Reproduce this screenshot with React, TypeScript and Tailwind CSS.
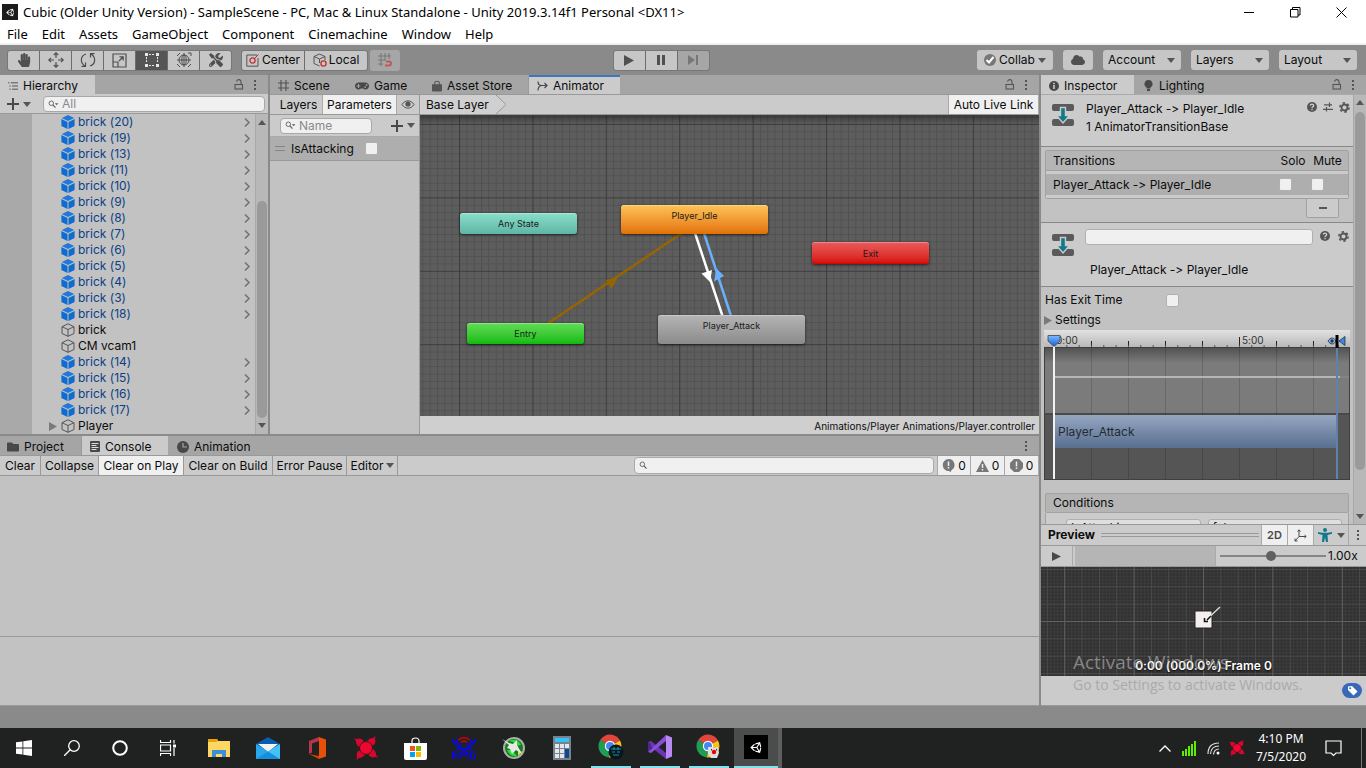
import React, { useState } from 'react';
import clsx from 'clsx';
import { FaCloud, FaFolder, FaGamepad, FaHandPaper, FaTools, FaUnity } from 'react-icons/fa';

type IconProps = { className?: string };

const BRICKS_TOP = [20, 19, 13, 11, 10, 9, 8, 7, 6, 5, 4, 3, 18];
const BRICKS_BOTTOM = [14, 15, 16, 17];

interface HierarchyItem {
  name: string;
  prefab: boolean;
  expandable?: boolean;
}

const hierarchyItems: HierarchyItem[] = [
  ...BRICKS_TOP.map(n => ({ name: `brick (${n})`, prefab: true })),
  { name: 'brick', prefab: false },
  { name: 'CM vcam1', prefab: false },
  ...BRICKS_BOTTOM.map(n => ({ name: `brick (${n})`, prefab: true })),
  { name: 'Player', prefab: false, expandable: true },
];

const menuItems = ['File', 'Edit', 'Assets', 'GameObject', 'Component', 'Cinemachine', 'Window', 'Help'];

/* ---------- small icons ---------- */

const Caret: React.FC<IconProps> = ({ className = 'text-[#555]' }) => (
  <svg width="8" height="5" viewBox="0 0 8 5" className={clsx('shrink-0', className)}><path d="M0 0h8L4 5z" fill="currentColor" /></svg>
);

const CaretUp: React.FC<IconProps> = ({ className = 'text-[#555]' }) => (
  <svg width="8" height="5" viewBox="0 0 8 5" className={clsx('shrink-0', className)}><path d="M0 5h8L4 0z" fill="currentColor" /></svg>
);

const Foldout: React.FC<IconProps> = ({ className }) => (
  <svg width="8" height="9" viewBox="0 0 8 9" className={clsx('shrink-0 text-[#7a7a7a]', className)}><path d="M0 0l8 4.5L0 9z" fill="currentColor" /></svg>
);

const PlusIcon: React.FC = () => (
  <svg width="12" height="12" viewBox="0 0 12 12"><path d="M6 0v12M0 6h12" stroke="#484848" strokeWidth="2" /></svg>
);

const Kebab: React.FC = () => (
  <svg width="4" height="12" viewBox="0 0 4 12" fill="#555"><rect x="1" y="1" width="2" height="2" /><rect x="1" y="5" width="2" height="2" /><rect x="1" y="9" width="2" height="2" /></svg>
);

const LockIcon: React.FC = () => (
  <svg width="10" height="11" viewBox="0 0 10 11" fill="none" stroke="#555" strokeWidth="1.1"><rect x="1" y="5.5" width="7.5" height="4.5" /><path d="M7 5.5V3a2.2 2.2 0 0 0-4.4-.4" /></svg>
);

const SearchIcon: React.FC<{ dropdown?: boolean }> = ({ dropdown }) => (
  <svg width="11" height="9" viewBox="0 0 12 10" fill="none" stroke="#5f5f5f" strokeWidth="1"><circle cx="3.6" cy="3.6" r="2.5" /><path d="M5.4 5.4L8.2 8.4" strokeWidth="1.3" />{dropdown && <path d="M7.500 3.6h4l-2 2.200z" fill="#5f5f5f" stroke="none" />}</svg>
);

const CubeIcon: React.FC<{ solid: boolean }> = ({ solid }) => (
  <svg width="14" height="14" viewBox="0 0 14 14" className="shrink-0">
    {solid ? (
      <>
        <path d="M7 0l6.2 3L7 6 .8 3z" fill="#2277da" />
        <path d="M.4 4.1l6.1 2.8V14L.4 11z" fill="#0f6dd2" />
        <path d="M13.6 4.1L7.5 6.9V14l6.1-3z" fill="#0f6dd2" />
      </>
    ) : (
      <path d="M7 .8l6 2.9v6.8l-6 2.8-6-2.8V3.7zM1 3.7l6 2.8 6-2.8M7 6.5v6.8" fill="none" stroke="#555" strokeWidth="1" strokeLinejoin="round" />
    )}
  </svg>
);

const HierarchyIcon: React.FC = () => (
  <svg width="10" height="10" viewBox="0 0 11 10" fill="none" stroke="#484848"><path d="M0 1.5h1.500M3 1.500h8M1.500 5h1.500M4.500 5h6.500M1.500 8.500h1.500M4.500 8.500h6.500" /></svg>
);

const GridIcon: React.FC = () => (
  <svg width="11" height="11" viewBox="0 0 11 11" stroke="#555" strokeWidth="1.200"><path d="M3 0v11M8 0v11M0 3h11M0 8h11" /></svg>
);

const BagIcon: React.FC = () => (
  <svg width="10" height="12" viewBox="0 0 11 12"><path d="M0 4h11v7q0 1-1 1H1q-1 0-1-1z" fill="#555" /><path d="M3 5.500V2.500Q3 .8 5.500.8T8 2.500v3" fill="none" stroke="#555" strokeWidth="1.200" /></svg>
);

const AnimatorIcon: React.FC = () => (
  <svg width="11" height="10" viewBox="0 0 11 10" fill="none" stroke="#484848" strokeWidth="1.200"><path d="M1 .5c0 3 1.500 4 4 4h4.500M1 9.500c0-3 1-4.500 3.500-5M7.500 2l2.500 2.500L7.500 7" /></svg>
);

const EyeIcon: React.FC = () => (
  <svg width="14" height="9" viewBox="0 0 14 9"><path d="M1 4.500C4-.4 10-.4 13 4.500 10 9.400 4 9.400 1 4.500z" fill="none" stroke="#555" /><circle cx="7" cy="4" r="2.600" fill="#555" /></svg>
);

const ConsoleIcon: React.FC = () => (
  <svg width="10" height="11" viewBox="0 0 10 11"><rect width="10" height="11" rx="1" fill="#484848" /><path d="M1.500 2.500h7M1.500 4.500h5M1.500 6.500h7M1.500 8.500h5" stroke="#ddd" /></svg>
);

const ClockIcon: React.FC = () => (
  <svg width="12" height="12" viewBox="0 0 12 12"><circle cx="6" cy="6" r="6" fill="#484848" /><path d="M6 2v4h4" fill="none" stroke="#a5a5a5" strokeWidth="1.200" /></svg>
);

const InfoIcon: React.FC = () => (
  <svg width="10" height="10" viewBox="0 0 10 10"><circle cx="5" cy="5" r="5" fill="#484848" /><path d="M5 4v4M5 1.800v1.400" stroke="#ccc" strokeWidth="1.600" /></svg>
);

const BulbIcon: React.FC = () => (
  <svg width="9" height="11" viewBox="0 0 9 11" fill="#484848"><path d="M4.500 0a4 4 0 0 1 2 7.500V8.500h-4V7.500a4 4 0 0 1 2-7.500zM3 9h3v2H3z" /></svg>
);

const HelpIcon: React.FC = () => (
  <svg width="10" height="10" viewBox="0 0 10 10"><circle cx="5" cy="5" r="5" fill="#555" /><path d="M3.300 3.700Q3.500 2.200 5 2.200t1.700 1.400C6.700 4.900 5 4.800 5 6.200M5 7v1.300" fill="none" stroke="#d5d5d5" strokeWidth="1.200" /></svg>
);

const PresetIcon: React.FC = () => (
  <svg width="10" height="10" viewBox="0 0 10 10" stroke="#555" strokeWidth="1.200"><path d="M1 2.800h8M6.500.6v4.400M0 7.300h10M3.500 5v4.600" /></svg>
);

const GearIcon: React.FC = () => (
  <svg width="11" height="11" viewBox="0 0 11 11" fill="none" stroke="#555"><circle cx="5.500" cy="5.500" r="3" strokeWidth="1.800" /><circle cx="5.500" cy="5.500" r="4.600" strokeWidth="1.600" strokeDasharray="2.300 2.500" /></svg>
);

const TransitionIcon: React.FC = () => (
  <svg width="22" height="22" viewBox="0 0 22 22" className="shrink-0">
    <path d="M2 0h18q2 0 2 2v3q0 2-2 2H2Q0 7 0 5V2Q0 0 2 0zM2 15h18q2 0 2 2v3q0 2-2 2H2q-2 0-2-2v-3q0-2 2-2z" fill="#5a5a5a" />
    <path d="M8.500 3.500h5v8H17.500l-6.500 7.500-6.500-7.500h4z" fill="#14788c" stroke="#cbcbcb" strokeWidth="1.400" />
  </svg>
);

/* ---------- shared controls ---------- */

const IconButton: React.FC<{ label: string; className?: string; children: React.ReactNode }> = ({ label, className, children }) => (
  <button aria-label={label} className={clsx('flex items-center justify-center shrink-0', className)}>{children}</button>
);

const Dropdown: React.FC<{ label: string; className?: string; selectClass: string }> = ({ label, className, selectClass }) => (
  <div className={clsx('relative flex items-center', className)}>
    <select aria-label={label} className={clsx('w-full appearance-none outline-none', selectClass)}>
      <option>{label}</option>
    </select>
    <Caret className="absolute right-1.5 pointer-events-none text-[#555]" />
  </div>
);

const checkboxClass = 'appearance-none w-[13px] h-[13px] rounded-[2px] bg-[#f0f0f0] border border-[#b0b0b0] checked:bg-[#3a72b0]';

const Tab: React.FC<{ icon: React.ReactNode; label: string; active?: boolean; focused?: boolean; className?: string }> = ({ icon, label, active, focused, className }) => (
  <button
    className={clsx(
      'flex items-center gap-[5px] h-[19px] px-2 whitespace-nowrap border-t-2',
      active ? 'bg-[#cbcbcb]' : 'border-r border-r-[#9a9a9a]',
      focused ? 'border-t-[#3a79bb]' : 'border-t-transparent',
      className,
    )}
  >
    {icon}
    <span>{label}</span>
  </button>
);

const TabActions: React.FC<{ lock?: boolean }> = ({ lock = true }) => (
  <div className="ml-auto flex items-center gap-[9px] pr-[11px]">
    {lock && <IconButton label="Lock"><LockIcon /></IconButton>}
    <IconButton label="Panel menu"><Kebab /></IconButton>
  </div>
);

const tabBarClass = 'flex h-[19px] shrink-0 bg-[#a5a5a5]';
const toolbarClass = 'flex h-[21px] shrink-0 bg-[#cbcbcb] border-y border-[#999]';

/* ---------- window chrome ---------- */

const TitleBar: React.FC = () => (
  <header className="bg-white text-black font-['Noto_Sans',sans-serif] text-[13px] border-b-2 border-[#f0f0f0]">
    <div className="flex items-center h-6 pl-[2px] pr-[2px]">
      <div className="w-4 h-4 bg-[#1c1c1c] flex items-center justify-center"><FaUnity size={9} className="text-white" /></div>
      <h1 className="ml-[5px] whitespace-nowrap">Cubic (Older Unity Version) - SampleScene - PC, Mac &amp; Linux Standalone - Unity 2019.3.14f1 Personal &lt;DX11&gt;</h1>
      <div className="ml-auto flex">
        <IconButton label="Minimize" className="w-[46px] h-5"><svg width="11" height="11"><path d="M0 5.500h10" stroke="#000" /></svg></IconButton>
        <IconButton label="Restore" className="w-[46px] h-5"><svg width="11" height="11" fill="none" stroke="#000"><path d="M.5 2.500h7.500v7.500H.5zM2.500 2.500V.5H10v7.500H8" /></svg></IconButton>
        <IconButton label="Close" className="w-[46px] h-5"><svg width="11" height="11" stroke="#000"><path d="M.5.5l10 10M10.500.5l-10 10" /></svg></IconButton>
      </div>
    </div>
    <nav className="flex h-[19px] pl-[7px] gap-[14px] items-center">
      {menuItems.map(item => <button key={item} className="whitespace-nowrap">{item}</button>)}
    </nav>
  </header>
);

const ToolGroup: React.FC<{ className?: string; children: React.ReactNode }> = ({ className, children }) => (
  <div className={clsx('flex h-[21px] rounded-[3px] overflow-hidden bg-[#6c6c6c] gap-px border border-[#777]', className)}>{children}</div>
);

const toolButton = 'w-[31px] bg-[#c6c6c6] text-[#4f4f4f]';

const MainToolbar: React.FC = () => (
  <div className="flex items-center h-[30px] shrink-0 bg-[#8a8a8a] pl-[7px] pr-[9px]">
    <div className="flex flex-1">
      <ToolGroup>
        <IconButton label="Hand" className={toolButton}><FaHandPaper size={14} /></IconButton>
        <IconButton label="Move" className={toolButton}>
          <svg width="16" height="16" viewBox="0 0 16 16" fill="none" stroke="currentColor" strokeWidth="1.200"><path d="M8 1v5M8 10v5M1 8h5M10 8h5M5.800 3L8 .8 10.200 3M5.800 13L8 15.200 10.200 13M3 5.800L.8 8 3 10.200M13 5.800L15.200 8 13 10.200" /></svg>
        </IconButton>
        <IconButton label="Rotate" className={toolButton}>
          <svg width="16" height="16" viewBox="0 0 16 16" fill="none" stroke="currentColor" strokeWidth="1.200"><path d="M6 2C0 4 0 11 5 14M1.500 14.300H5.500V10.500M10 14c6-2 6-9 1-12M14.500 1.700H10.500V5.500" /></svg>
        </IconButton>
        <IconButton label="Scale" className={toolButton}>
          <svg width="15" height="15" viewBox="0 0 15 15" fill="none" stroke="currentColor" strokeWidth="1.200"><path d="M1 1h13v13H1zM1 9h5v5M7 8l4-4M7.500 3.800h3.700v3.700" /></svg>
        </IconButton>
        <IconButton label="Rect" className="w-[31px] bg-[#555] text-[#e8e8e8]">
          <svg width="14" height="14" viewBox="0 0 14 14" fill="currentColor"><path d="M0 0h3v3H0zM11 0h3v3h-3zM0 11h3v3H0zM11 11h3v3h-3z" /><path d="M4 1.500h6M4 12.500h6M1.500 4v6M12.500 4v6" stroke="currentColor" strokeDasharray="2 1" /></svg>
        </IconButton>
        <IconButton label="Transform" className={toolButton}>
          <svg width="16" height="16" viewBox="0 0 16 16" fill="none" stroke="currentColor"><circle cx="8" cy="8" r="5" /><ellipse cx="8" cy="8" rx="2.200" ry="5" /><path d="M1 8h14M8 1v14M1 4L4 1M12 1h3v3M1 12l3 3M15 12l-3 3" /></svg>
        </IconButton>
        <IconButton label="Custom tools" className={toolButton}><FaTools size={14} /></IconButton>
      </ToolGroup>
      <ToolGroup className="ml-[9px]">
        <button className="w-[62px] bg-[#c6c6c6] flex items-center justify-center gap-[3px]">
          <svg width="13" height="13" viewBox="0 0 13 13" fill="none"><path d="M11 1H.8v11.200H12V4" stroke="#555" /><circle cx="6.500" cy="6.500" r="2.600" stroke="#c03030" strokeWidth="1.300" /><path d="M8.500 4.500L12.500.5" stroke="#c03030" /></svg>
          Center
        </button>
        <button className="w-[62px] bg-[#c6c6c6] flex items-center justify-center gap-[2px]">
          <svg width="14" height="14" viewBox="0 0 14 14" fill="none"><path d="M6.500 13L1 10.500V3.500L6.500 1 12 3.500V7M1 3.500L6.500 6 12 3.500M6.500 6v4" stroke="#555" /><circle cx="10.500" cy="10.500" r="2.600" stroke="#c03030" strokeWidth="1.300" /></svg>
          Local
        </button>
      </ToolGroup>
      <button aria-label="Grid snapping" className="ml-[2px] w-[30px] h-[21px] rounded-[3px] bg-[#a6a6a6] flex items-center justify-center">
        <svg width="14" height="14" viewBox="0 0 14 14" fill="none"><path d="M3 0v13M7 0v8M11 0v6M0 3h13M0 7h7M0 11h5" stroke="#777" /><path d="M8 8.500h3a2 2 0 0 1 0 4H7" stroke="#c05a5a" strokeWidth="2" /></svg>
      </button>
    </div>
    <ToolGroup className="mr-[42px]">
      <IconButton label="Play" className={toolButton}><svg width="10" height="11"><path d="M0 0l10 5.500L0 11z" fill="#505050" /></svg></IconButton>
      <IconButton label="Pause" className={toolButton}><svg width="8" height="10"><path d="M0 0h3v10H0zM5 0h3v10H5z" fill="#505050" /></svg></IconButton>
      <IconButton label="Step" className="w-[31px] bg-[#a6a6a6]"><svg width="10" height="10"><path d="M0 0l7 5-7 5zM8 0h2v10H8z" fill="#777" /></svg></IconButton>
    </ToolGroup>
    <div className="flex flex-1 justify-end gap-[10px]">
      <button className="flex items-center justify-center w-[76px] h-5 rounded-[3px] bg-[#c6c6c6] gap-[3px]">
        <svg width="12" height="12" viewBox="0 0 12 12"><circle cx="6" cy="6" r="6" fill="#777" /><path d="M2.500 6l2.500 2.500L9.500 3" fill="none" stroke="#fff" strokeWidth="2" /></svg>
        Collab <Caret />
      </button>
      <IconButton label="Cloud services" className="w-[30px] h-5 rounded-[3px] bg-[#c6c6c6] text-[#505050]"><FaCloud size={14} /></IconButton>
      {['Account', 'Layers', 'Layout'].map(label => (
        <Dropdown key={label} label={label} className="w-[78px]" selectClass="h-5 pl-[5px] rounded-[3px] bg-[#c6c6c6]" />
      ))}
    </div>
  </div>
);

/* ---------- hierarchy ---------- */

const HierarchyRow: React.FC<{ item: HierarchyItem }> = ({ item }) => (
  <li className={clsx('flex items-center h-4 pl-[17px] pr-1', item.prefab && 'text-[#0a3f87]')}>
    <span className="w-[12px] flex justify-start">{item.expandable && <Foldout />}</span>
    <CubeIcon solid={item.prefab} />
    <span className="ml-[3px] flex-1 whitespace-nowrap">{item.name}</span>
    {item.prefab && <svg width="7" height="9" viewBox="0 0 7 9" fill="none" stroke="#707070" strokeWidth="1.500"><path d="M1 .5l4 4-4 4" /></svg>}
  </li>
);

const HierarchyPanel: React.FC = () => (
  <section className="w-[268px] shrink-0 flex flex-col">
    <div className={tabBarClass}>
      <Tab icon={<HierarchyIcon />} label="Hierarchy" active className="w-[95px]" />
      <TabActions />
    </div>
    <div className="flex items-center h-5 pt-px bg-[#cbcbcb] border-b border-[#999] pl-[7px] pr-[3px]">
      <IconButton label="Create" className="gap-[4px] w-9 justify-start"><PlusIcon /><Caret /></IconButton>
      <label className="flex flex-1 min-w-0 items-center h-4 rounded-[4px] bg-[#f0f0f0] border border-[#a8a8a8] pl-1 gap-[3px]">
        <SearchIcon dropdown />
        <input aria-label="Search hierarchy" placeholder="All" className="min-w-0 flex-1 outline-none placeholder:text-[#8a8a8a]" />
      </label>
    </div>
    <div className="flex flex-1">
      <div className="w-8 bg-[#a9a9a9]" />
      <ul className="flex-1">
        {hierarchyItems.map(item => <HierarchyRow key={item.name} item={item} />)}
      </ul>
      <div className="w-[13px] flex flex-col items-center justify-between bg-[#b8b8b8] border-l border-[#a8a8a8] py-[6px]">
        <CaretUp />
        <div className="w-[10px] flex-1 flex flex-col justify-end pb-[5px]"><div className="h-[74%] rounded-full bg-[#9a9a9a]" /></div>
        <Caret />
      </div>
    </div>
  </section>
);

/* ---------- animator ---------- */

interface StateNode {
  name: string;
  tone: string;
  place: string;
}

const stateNodes: StateNode[] = [
  { name: 'Any State', tone: 'from-[#8adfca] to-[#5fb5a5]', place: 'left-[40px] top-[98px] w-[117px] h-[21px] items-center' },
  { name: 'Player_Idle', tone: 'from-[#fdc455] to-[#e27100]', place: 'left-[201px] top-[90px] w-[147px] h-[29px] pt-[5px] items-start' },
  { name: 'Exit', tone: 'from-[#e95a5a] to-[#d50000]', place: 'left-[392px] top-[127px] w-[117px] h-[22px] items-center' },
  { name: 'Entry', tone: 'from-[#5fdc55] to-[#08bb08]', place: 'left-[47px] top-[208px] w-[117px] h-[21px] items-center' },
  { name: 'Player_Attack', tone: 'from-[#b5b5b5] to-[#8b8b8b]', place: 'left-[238px] top-[200px] w-[147px] h-[29px] pt-[5px] items-start' },
];

const AnimatorGraph: React.FC = () => (
  <div className="relative flex-1 overflow-hidden bg-[#5d5d5d]">
    <svg width="100%" height="100%" className="absolute inset-0">
      <defs>
        <pattern id="graph-minor" x="39" y="9" width="7.340" height="7.340" patternUnits="userSpaceOnUse">
          <path d="M.5 0v7.340M0 .5h7.340" stroke="#000" strokeOpacity=".13" />
        </pattern>
        <pattern id="graph-major" x="39" y="9" width="73.400" height="73.400" patternUnits="userSpaceOnUse">
          <path d="M.5 0v73.400M0 .5h73.400" stroke="#000" strokeOpacity=".24" strokeWidth="1.200" />
        </pattern>
        <linearGradient id="graph-shade" x1="0" y1="0" x2="0" y2="1"><stop offset="0" stopOpacity=".35" /><stop offset="1" stopOpacity="0" /></linearGradient>
      </defs>
      <rect width="100%" height="100%" fill="url(#graph-minor)" />
      <rect width="100%" height="100%" fill="url(#graph-major)" />
      <rect width="100%" height="10" fill="url(#graph-shade)" />
      <path d="M127 209L262 118" stroke="#966400" strokeWidth="2.500" />
      <path d="M198 162L185.500 165 191.500 174z" fill="#966400" />
      <path d="M275 118L302.500 201" stroke="#fff" strokeWidth="2.500" />
      <path d="M281.500 158.500L292 155 290 167z" fill="#fff" />
      <path d="M284 118L311 201" stroke="#6ab0fc" strokeWidth="2.500" />
      <path d="M296.500 153.500L294 166.500 304 161z" fill="#6ab0fc" />
    </svg>
    {stateNodes.map(node => (
      <button key={node.name} className={clsx('absolute flex justify-center rounded-[3px] bg-linear-to-b text-[9px] leading-[11px] text-[#1a1a1a] shadow-[0_1px_3px_rgba(0,0,0,0.6),inset_0_1px_0_rgba(255,255,255,0.3)]', node.tone, node.place)}>
        {node.name}
      </button>
    ))}
  </div>
);

const AnimatorPanel: React.FC = () => {
  const [isAttacking, setIsAttacking] = useState(false);

  return (
    <section className="flex-1 min-w-0 flex flex-col">
      <div className={tabBarClass}>
        <Tab icon={<GridIcon />} label="Scene" className="w-[77px] border-r-0" />
        <Tab icon={<FaGamepad size={14} className="text-[#484848]" />} label="Game" className="w-[77px] border-r-0 gap-[3px]" />
        <Tab icon={<BagIcon />} label="Asset Store" className="w-[105px]" />
        <Tab icon={<AnimatorIcon />} label="Animator" active focused className="w-[91px]" />
        <TabActions />
      </div>
      <div className={toolbarClass}>
        <div className="w-[150px] shrink-0 flex pl-[5px] border-r border-[#999]">
          <button className="w-[47px]">Layers</button>
          <button className="w-[75px] bg-[#f0f0f0] border-x border-[#aaa]">Parameters</button>
          <IconButton label="Toggle visibility" className="flex-1"><EyeIcon /></IconButton>
        </div>
        <button className="pl-[6px] flex items-center whitespace-nowrap bg-[#d0d0d0]">Base Layer</button>
        <svg width="20" height="19" viewBox="0 0 20 19" className="shrink-0"><path d="M0 0h7l10 9.500L7 19H0z" fill="#d0d0d0" /><path d="M7 0l10 9.500L7 19" fill="none" stroke="#999" /></svg>
        <button className="ml-auto w-[91px] bg-[#f0f0f0] border-x border-[#aaa] whitespace-nowrap">Auto Live Link</button>
      </div>
      <div className="flex flex-1 min-h-0">
        <div className="w-[150px] shrink-0 border-r border-[#999]">
          <div className="flex items-center h-[22px] pl-[10px] pr-[4px] bg-[#cbcbcb] border-b border-[#aaa]">
            <label className="flex items-center w-[92px] h-4 rounded-[4px] bg-[#f0f0f0] border border-[#a8a8a8] pl-1 gap-[3px]">
              <SearchIcon dropdown />
              <input aria-label="Search parameters" placeholder="Name" className="min-w-0 flex-1 outline-none placeholder:text-[#8a8a8a]" />
            </label>
            <IconButton label="Add parameter" className="ml-auto gap-[4px]"><PlusIcon /><Caret /></IconButton>
          </div>
          <label className="flex items-center h-6 pl-[5px] bg-[#aeaeae] border-b border-[#999]">
            <span className="w-[10px] h-[5px] border-y border-[#858585]" />
            <span className="ml-[6px] w-[74px]">IsAttacking</span>
            <input type="checkbox" className={checkboxClass} checked={isAttacking} onChange={e => setIsAttacking(e.target.checked)} />
          </label>
        </div>
        <div className="flex-1 min-w-0 flex flex-col">
          <AnimatorGraph />
          <div className="h-[18px] shrink-0 flex items-center justify-end pr-1 pt-[2px] bg-[#cfcfcf] text-[10px]">Animations/Player Animations/Player.controller</div>
        </div>
      </div>
    </section>
  );
};

/* ---------- console ---------- */

const ConsolePanel: React.FC = () => {
  const button = 'border-r border-[#999] whitespace-nowrap';
  return (
    <section className="flex-1 flex flex-col min-h-0">
      <div className={tabBarClass}>
        <Tab icon={<FaFolder size={12} className="text-[#484848]" />} label="Project" className="w-[82px] px-[7px] gap-[4px]" />
        <Tab icon={<ConsoleIcon />} label="Console" active className="w-[86px]" />
        <Tab icon={<ClockIcon />} label="Animation" className="border-r-0 gap-[4px] px-[9px]" />
        <TabActions lock={false} />
      </div>
      <div className={toolbarClass}>
        <button className={clsx(button, 'w-[41px]')}>Clear</button>
        <button className={clsx(button, 'w-[58px]')}>Collapse</button>
        <button className={clsx(button, 'w-[85px] bg-[#f0f0f0]')}>Clear on Play</button>
        <button className={clsx(button, 'w-[89px]')}>Clear on Build</button>
        <button className={clsx(button, 'w-[74px]')}>Error Pause</button>
        <button className={clsx(button, 'w-[51px] flex items-center justify-center gap-[2px]')}>Editor <Caret /></button>
        <label className="ml-auto my-px w-[300px] flex items-center rounded-[4px] bg-[#f0f0f0] border border-[#a8a8a8] pl-1">
          <SearchIcon />
          <input aria-label="Search console" className="flex-1 min-w-0 outline-none" />
        </label>
        <div className="ml-[3px] flex">
          <button className="w-[34px] flex items-center justify-center gap-[3px] bg-[#efefef] border-x border-[#aaa]">
            <svg width="13" height="13" viewBox="0 0 13 13"><path d="M6.500 0a6 6 0 0 1 3 11.200L8.500 13 7 12A6 6 0 1 1 6.500 0z" fill="#777" /><path d="M6.500 2.500v4.500M6.500 8v1.500" stroke="#eee" strokeWidth="1.500" /></svg>0
          </button>
          <button className="w-[34px] flex items-center justify-center gap-[3px] bg-[#efefef] border-r border-[#aaa]">
            <svg width="13" height="12" viewBox="0 0 13 12"><path d="M6.500 0L13 12H0z" fill="#777" /><path d="M6.500 4v4M6.500 9v1.500" stroke="#eee" strokeWidth="1.500" /></svg>0
          </button>
          <button className="w-[34px] flex items-center justify-center gap-[3px] bg-[#efefef] border-r border-[#aaa]">
            <svg width="13" height="13" viewBox="0 0 13 13"><path d="M4 0h5l4 4v5l-4 4H4L0 9V4z" fill="#777" /><path d="M6.500 2.500v5M6.500 8.500v1.500" stroke="#eee" strokeWidth="1.500" /></svg>0
          </button>
        </div>
      </div>
      <div className="flex-1" />
      <div className="h-[70px] border-y border-[#999]" />
    </section>
  );
};

/* ---------- inspector ---------- */

const TransitionTimeline: React.FC = () => {
  const ticks = Array.from({ length: 24 }, (_, i) => i);
  return (
    <svg viewBox="0 0 306 150" className="block mx-[3px] mt-[3px]" fontFamily="Inter, sans-serif">
      <defs>
        <linearGradient id="tl-ruler" x1="0" y1="0" x2="0" y2="1"><stop offset="0" stopColor="#e2e2e2" /><stop offset="1" stopColor="#b8b8b8" /></linearGradient>
        <linearGradient id="tl-shade" x1="0" y1="0" x2="0" y2="1"><stop offset="0" stopColor="#505050" /><stop offset="1" stopColor="#7b7b7b" /></linearGradient>
        <linearGradient id="tl-clip" x1="0" y1="0" x2="0" y2="1"><stop offset="0" stopColor="#95a6c0" /><stop offset="1" stopColor="#586f90" /></linearGradient>
        <linearGradient id="tl-head" x1="0" y1="0" x2="0" y2="1"><stop offset="0" stopColor="#7cbaff" /><stop offset="1" stopColor="#1260d8" /></linearGradient>
      </defs>
      <rect width="306" height="17" fill="url(#tl-ruler)" />
      <rect y="17" width="306" height="66" fill="#7b7b7b" />
      <rect y="17" width="306" height="16" fill="url(#tl-shade)" />
      <rect y="83" width="306" height="67" fill="#555" />
      <path d="M0 17.500h306M0 84h306M0 149.500h306M.5 17v133M305.500 17v133" stroke="#404040" />
      {ticks.slice(1, 8).map(i => (
        <path key={i} d={`M${10.500 + i * 37} ${i === 5 ? 7 : 11}V17`} stroke="#222" />
      ))}
      {ticks.map(i => (
        <path key={i} d={`M${10.500 + i * 12.330} 15V17`} stroke="#555" />
      ))}
      {ticks.slice(1, 8).map(i => (
        <path key={i} d={`M${10.500 + i * 37} 18V149`} stroke="#000" strokeOpacity=".15" />
      ))}
      <text x="12" y="14" fontSize="10" fill="#333">0:00</text>
      <text x="198" y="14" fontSize="10" fill="#333">5:00</text>
      <path d="M10 47h286" stroke="#c8c8c8" strokeWidth="1.500" />
      <path d="M296 47h9" stroke="#8c8c8c" />
      <rect x="10" y="85" width="284" height="33" fill="url(#tl-clip)" />
      <text x="14" y="106" fontSize="12" fill="#252a33">Player_Attack</text>
      <path d="M293 17V149" stroke="#6080b0" strokeWidth="2" />
      <path d="M10 12V149" stroke="#f2f2f2" strokeWidth="2" />
      <path d="M4 5.500h12V11L10 16.500 4 11z" fill="url(#tl-head)" stroke="#444" strokeWidth=".8" />
      <path d="M284 11c2.500-4 6-4 8 0-2 4-5.500 4-8 0z" fill="#8fb8e8" stroke="#345" />
      <path d="M301 6.500v9l-6-4.500z" fill="#3b87e6" stroke="#234" strokeWidth=".8" />
      <circle cx="288" cy="11" r="1.700" fill="#235" />
      <path d="M293 5v13" stroke="#000" strokeWidth="3" />
    </svg>
  );
};

const InspectorPanel: React.FC = () => (
  <div className="flex flex-1 min-h-0 overflow-hidden border-t border-[#aaa]">
    <div className="flex-1 min-w-0 overflow-hidden">
      <div className="flex h-[52px] bg-[#cbcbcb] border-b border-[#888] pl-[11px] pr-[3px] pt-[9px]">
        <TransitionIcon />
        <h2 className="ml-3 -mt-1 leading-[18px] flex-1 whitespace-nowrap">Player_Attack -&gt; Player_Idle<br />1 AnimatorTransitionBase</h2>
        <div className="flex gap-[6px] h-3 -mt-1 items-start">
          <IconButton label="Help" className="pt-[2px]"><HelpIcon /></IconButton>
          <IconButton label="Presets" className="pt-[2px]"><PresetIcon /></IconButton>
          <IconButton label="Settings" className="pt-[2px]"><GearIcon /></IconButton>
        </div>
      </div>
      <div className="px-1 pt-[3px] h-[76px] border-b border-[#888]">
        <table className="w-full border-separate border-spacing-0 border border-[#a2a2a2] rounded-[2px]">
          <thead>
            <tr className="h-5 bg-[#b5b5b5]">
              <th className="pl-[7px] font-normal text-left border-b border-[#a2a2a2]">Transitions</th>
              <th className="w-[34px] font-normal border-b border-[#a2a2a2]">Solo</th>
              <th className="w-[38px] pr-[3px] font-normal border-b border-[#a2a2a2]">Mute</th>
            </tr>
          </thead>
          <tbody>
            <tr className="h-[3px] bg-[#cbcbcb]"><td colSpan={3} /></tr>
            <tr className="h-[21px] bg-[#aeaeae]">
              <td className="pl-[7px] whitespace-nowrap">Player_Attack -&gt; Player_Idle</td>
              <td><input type="checkbox" aria-label="Solo" className={clsx(checkboxClass, 'block ml-[3px]')} /></td>
              <td><input type="checkbox" aria-label="Mute" className={clsx(checkboxClass, 'block ml-px')} /></td>
            </tr>
            <tr className="h-[3px] bg-[#cbcbcb]"><td colSpan={3} /></tr>
          </tbody>
        </table>
        <button aria-label="Remove transition" className="ml-auto mr-[10px] flex justify-center items-center w-[33px] h-[19px] bg-[#cbcbcb] border border-t-0 border-[#a2a2a2] rounded-b-[2px]">
          <span className="w-2 h-[2px] bg-[#555]" />
        </button>
      </div>
      <div className="h-[64px] bg-[#cbcbcb] border-b border-[#888] pl-[11px] pr-1 pt-[6px]">
        <div className="flex items-start">
          <div className="pt-[5px]"><TransitionIcon /></div>
          <input aria-label="Transition name" className="ml-[11px] min-w-0 flex-1 h-4 rounded-[3px] bg-[#f0f0f0] border border-[#b0b0b0]" />
          <IconButton label="Help" className="ml-[7px] pt-[2px]"><HelpIcon /></IconButton>
          <IconButton label="Settings" className="ml-[8px] pt-[2px]"><GearIcon /></IconButton>
        </div>
        <p className="ml-[38px] mt-[6px] leading-4">Player_Attack -&gt; Player_Idle</p>
      </div>
      <label className="flex items-center h-[26px] pl-1">
        <span className="w-[121px]">Has Exit Time</span>
        <input type="checkbox" className={checkboxClass} />
      </label>
      <button className="flex items-center h-[14px] pl-[3px] gap-[3px]"><Foldout />Settings</button>
      <TransitionTimeline />
      <div className="mx-1 mt-[13px] flex items-center h-5 pl-[7px] bg-[#b5b5b5] border border-[#a2a2a2] rounded-[2px]">Conditions</div>
      <div className="mx-1 h-8 flex gap-[7px] pl-[20px] pr-[6px] pt-[6px] bg-[#cbcbcb] border-x border-[#a2a2a2]">
        <Dropdown label="IsAttacking" className="flex-1 h-[18px]" selectClass="h-[18px] pl-1 rounded-[3px] bg-[#dfdfdf] border border-[#b0b0b0]" />
        <Dropdown label="false" className="flex-1 h-[18px]" selectClass="h-[18px] pl-1 rounded-[3px] bg-[#dfdfdf] border border-[#b0b0b0]" />
      </div>
    </div>
    <div className="w-[13px] shrink-0 flex flex-col items-center bg-[#b8b8b8] border-l border-[#a8a8a8] py-[5px]">
      <CaretUp />
      <div className="w-[10px] flex-1 pt-[7px]"><div className="h-[89%] rounded-full bg-[#9a9a9a]" /></div>
      <Caret />
    </div>
  </div>
);

const PreviewPanel: React.FC = () => {
  const [speed, setSpeed] = useState(1);

  return (
    <section className="shrink-0 border-t border-[#999]">
      <div className="flex items-center h-[21px] bg-[#cbcbcb] border-b border-[#999] pl-[7px]">
        <h2 className="font-bold">Preview</h2>
        <span className="flex-1 mx-[6px] mr-[2px] h-[4px] border-y border-[#999]" />
        <button className="w-[27px] h-full bg-[#efefef] border-x border-[#aaa] text-[11px] font-semibold text-[#484848]">2D</button>
        <IconButton label="Pivot" className="w-[26px] h-full bg-[#efefef] border-r border-[#aaa]">
          <svg width="13" height="13" viewBox="0 0 13 13" fill="none" stroke="#484848"><path d="M5 1v6.500h7M5 7.500L1 12M3.500 2.500L5 .8l1.500 1.700M10.500 6l1.700 1.500L10.500 9M1 9.500V12h2.500" /></svg>
        </IconButton>
        <IconButton label="Avatar" className="w-[35px] h-full gap-[5px] border-r border-[#aaa]">
          <svg width="14" height="14" viewBox="0 0 14 14" fill="#14788c"><circle cx="7" cy="2" r="2" /><path d="M0 4l4 .8h6L14 4v1.800L9.500 7 10 14H8L7 9.500 6 14H4l.5-7L0 5.800z" /></svg>
          <Caret />
        </IconButton>
        <IconButton label="Preview menu" className="w-[17px]"><Kebab /></IconButton>
      </div>
      <div className="flex items-center h-[21px] bg-[#cbcbcb] border-b border-[#999]">
        <IconButton label="Play preview" className="w-8 h-full border-r border-[#aaa]"><svg width="9" height="9"><path d="M0 0l9 4.500L0 9z" fill="#484848" /></svg></IconButton>
        <div className="ml-[2px] flex-1 h-full bg-[#b5b5b5] border-r border-[#aaa]" />
        <input
          type="range"
          aria-label="Playback speed"
          min="0"
          max="2.1"
          step="0.01"
          value={speed}
          onChange={e => setSpeed(Number(e.target.value))}
          className="ml-1 w-[106px] h-[10px] appearance-none bg-transparent [&::-webkit-slider-runnable-track]:h-[2px] [&::-webkit-slider-runnable-track]:bg-[#858585] [&::-webkit-slider-thumb]:appearance-none [&::-webkit-slider-thumb]:w-[10px] [&::-webkit-slider-thumb]:h-[10px] [&::-webkit-slider-thumb]:-mt-[4px] [&::-webkit-slider-thumb]:rounded-full [&::-webkit-slider-thumb]:bg-[#606060]"
        />
        <span className="w-[40px] pl-[2px]">{speed.toFixed(2)}x</span>
      </div>
      <div className="relative h-[109px] bg-[#313131] flex flex-col justify-end items-center pb-[2px]">
        <svg width="100%" height="100%" className="absolute inset-0">
          <defs>
            <pattern id="pv-minor" x="162" y="54" width="3.470" height="3.470" patternUnits="userSpaceOnUse"><path d="M.5 0v3.470M0 .5h3.470" stroke="#fff" strokeOpacity=".05" /></pattern>
            <pattern id="pv-mid" x="162" y="54" width="17.350" height="17.350" patternUnits="userSpaceOnUse"><path d="M.5 0v17.350M0 .5h17.350" stroke="#fff" strokeOpacity=".08" /></pattern>
            <pattern id="pv-major" x="162" y="54" width="69.400" height="69.400" patternUnits="userSpaceOnUse"><path d="M.5 0v69.400M0 .5h69.400" stroke="#fff" strokeOpacity=".12" /></pattern>
          </defs>
          <rect width="100%" height="100%" fill="url(#pv-minor)" />
          <rect width="100%" height="100%" fill="url(#pv-mid)" />
          <rect width="100%" height="100%" fill="url(#pv-major)" />
          <rect x="154" y="44" width="17" height="17" fill="#f4eeee" stroke="#222" />
          <path d="M163.500 51v3.500h3.500M166 53l13-13" fill="none" stroke="#111" strokeWidth="1.500" />
          <path d="M169.500 49l9.500-9" stroke="#ddd" strokeWidth="1.500" />
        </svg>
        <p className="relative text-[12px] font-semibold leading-4 text-white whitespace-nowrap [text-shadow:0_1px_2px_#000]">0:00 (000.0%) Frame 0</p>
        <div className="absolute left-8 top-[82px] z-10 pointer-events-none font-['Open_Sans',sans-serif] whitespace-nowrap">
          <p className="text-[19px] leading-[26px] text-[#bdbdbd]/60">Activate Windows</p>
          <p className="text-[14px] leading-[20px] text-[#aaa]">Go to Settings to activate Windows.</p>
        </div>
      </div>
      <div className="flex h-[30px] items-center justify-end pr-1 bg-[#cbcbcb] border-b border-[#999]">
        <IconButton label="Asset labels" className="w-5 h-[15px] rounded-full bg-[#3a68b8]">
          <svg width="11" height="11" viewBox="0 0 11 11"><path d="M1 1.500L5 1l5.500 5.500-4 4L1 5z" fill="#fff" /><circle cx="3.200" cy="3.300" r="1" fill="#3a68b8" /></svg>
        </IconButton>
      </div>
    </section>
  );
};

/* ---------- taskbar ---------- */

const RedFlower: React.FC<{ size: number }> = ({ size }) => (
  <svg width={size} height={size} viewBox="0 0 24 24" fill="#d8062c">
    {[0, 90, 180, 270].map(angle => (
      <path key={angle} d="M0 2.500L3 3Q7 1.500 9.500 5L7.500 8.500 5 11Q1.500 8 2 5z" transform={`rotate(${angle} 12 12)`} />
    ))}
    <circle cx="12" cy="12" r="6.400" fill="#f0062f" stroke="#202121" strokeWidth=".8" />
  </svg>
);

const ChromeIcon: React.FC<{ badge: 'hacker' | 'clown' }> = ({ badge }) => (
  <svg width="26" height="26" viewBox="0 0 26 26">
    <path d="M12 12L2.200 6A11.500 11.500 0 0 1 22 6.500z" fill="#e0463a" />
    <path d="M12 12L22 6.500A11.500 11.500 0 0 1 11 23.500z" fill="#fbc116" />
    <path d="M12 12l-1 11.500A11.500 11.500 0 0 1 2.200 6z" fill="#1f9d55" />
    <circle cx="12" cy="12" r="5.200" fill="#fff" />
    <circle cx="12" cy="12" r="4" fill="#4487f4" />
    {badge === 'hacker' ? (
      <><circle cx="18" cy="18" r="7.500" fill="#07171d" /><path d="M13 15h10M14 18h3M19 18h3M15 21h6M16 13v3M20 13v3" stroke="#1590a8" strokeWidth="1.200" /></>
    ) : (
      <><path d="M12 13h4l2 1 4-1 1 6-2 5h-6l-3-4z" fill="#ddd" /><circle cx="18" cy="18" r="2.200" fill="#e00" /><path d="M15.500 15v1.500M20.500 15v1.500" stroke="#333" /></>
    )}
  </svg>
);

const systemButtons = [
  { label: 'Start', icon: <svg width="16" height="16" viewBox="0 0 16 16" fill="#fff"><path d="M0 2.300L6.500 1.400V7.600H0zM7.300 1.300L16 0v7.600H7.300zM0 8.400h6.500v6.200L0 13.700zM7.300 8.400H16V16l-8.700-1.300z" /></svg> },
  { label: 'Search', icon: <svg width="16" height="16" viewBox="0 0 16 16" fill="none" stroke="#fff" strokeWidth="1.300"><circle cx="10" cy="6" r="5.300" /><path d="M6.200 9.800L0 16" /></svg> },
  { label: 'Cortana', icon: <svg width="16" height="16" viewBox="0 0 16 16"><circle cx="8" cy="8" r="6.800" fill="none" stroke="#fff" strokeWidth="2" /></svg> },
  { label: 'Task View', icon: <svg width="16" height="16" viewBox="0 0 16 16" fill="none" stroke="#fff" strokeWidth="1.200"><path d="M.5 0v2.500h10V0M.5 16v-2.500h10V16M.5 5h10v6H.5zM14 0v3.500M14 8v8" /><path d="M13 4.500h3v3h-3z" fill="#fff" stroke="none" /></svg> },
];

const appButtons = [
  {
    label: 'File Explorer',
    icon: <svg width="22" height="18" viewBox="0 0 22 18"><path d="M0 0h9l1 2h12v16H0z" fill="#fdd663" /><path d="M0 0h9l1 2-2 1H0z" fill="#e5a50a" /><path d="M4 18v-7h14v7h-4v-3H8v3z" fill="#3b8fd8" /></svg>,
  },
  {
    label: 'Mail',
    icon: <svg width="24" height="22" viewBox="0 0 24 22"><path d="M0 7L12 0l12 7v15H0z" fill="#0b5cad" /><path d="M2 7h20L12 15z" fill="#f3f3f3" /><path d="M0 7l12 7.500L0 22z" fill="#28a8ea" /><path d="M24 7L0 22h24z" fill="#45c1f5" /><path d="M12 14.500L24 22H0z" fill="#1490df" /></svg>,
  },
  {
    label: 'Office',
    icon: <svg width="18" height="22" viewBox="0 0 18 22"><path d="M11 0L1 4v13l3-1.500V6.500L11 4z" fill="#b5344e" /><path d="M11 0l7 2.500v17L11 22z" fill="#e8500a" /><path d="M1 17l10 2v3z" fill="#d83b01" /></svg>,
  },
  { label: 'Red app', icon: <RedFlower size={24} /> },
  {
    label: 'Microsoft Store',
    icon: <svg width="23" height="23" viewBox="0 0 23 23"><path d="M0 6h23v15q0 2-2 2H2q-2 0-2-2z" fill="#fff" /><path d="M8 7V4q0-3 3.500-3T15 4v3" fill="none" stroke="#fff" strokeWidth="1.200" /><path d="M6 9h5v5H6z" fill="#f25022" /><path d="M12 9h5v5h-5z" fill="#7fba00" /><path d="M6 15h5v5H6z" fill="#00a4ef" /><path d="M12 15h5v5h-5z" fill="#ffb900" /></svg>,
  },
  {
    label: 'Robotics',
    icon: <svg width="24" height="22" viewBox="0 0 24 22" fill="none" stroke="#0808f0" strokeWidth="1.600"><path d="M6.500 3q5.500-5 11 0M9 5.500q3-3 6 0" stroke="#d00" strokeWidth="1.300" /><path d="M1 2v3h4V2M3 5v2l5 4M19 2v3h4V2M21 5v2l-5 4M8 5v5l4 4 4-4V5M5 12h14M1 15h4M1 15v7M1 18h3v4M8 22v-7l4 3 4-3v7M23 15h-4v7h4v-4" /></svg>,
  },
  {
    label: 'Afterburner',
    icon: <svg width="23" height="22" viewBox="0 0 23 22"><circle cx="12" cy="11" r="11" fill="#a9b0a9" /><circle cx="12" cy="11" r="9" fill="#1c7a26" /><path d="M7 4q8-4 12 4l-5 1-3-4zM5 13q3 7 10 6l-5-6z" fill="#27e034" /><path d="M16 13l4 2-4 4z" fill="#d8e04a" /><path d="M0 2l7 4 4 1 4-4v5l5 9-6-4-4 4-2-5-3-1 2-3z" fill="#e8e8e8" /></svg>,
  },
  {
    label: 'Calculator',
    icon: <svg width="18" height="24" viewBox="0 0 18 24"><rect width="18" height="24" fill="#76838f" /><path d="M2 2h14v4H2z" fill="#35c3f5" /><path d="M2 8h4v4H2zM7 8h4v4H7zM12 8h4v4h-4zM2 13h4v4H2zM7 13h4v4H7zM2 18h4v4H2zM7 18h4v4H7z" fill="#e3e8ec" /><path d="M12 13h4v9h-4z" fill="#10488c" /></svg>,
  },
  { label: 'Chrome', icon: <ChromeIcon badge="hacker" />, running: true },
  {
    label: 'Visual Studio',
    icon: <svg width="24" height="24" viewBox="0 0 24 24"><path d="M0 7l3-1 15 12v6L3 12z" fill="#6b35b5" /><path d="M0 17V7l3 2v6z" fill="#50278c" /><path d="M0 17l18-17v6L3 18z" fill="#8a4fd8" /><path d="M18 0l6 2.500v19L18 24z" fill="#b98af5" /></svg>,
    running: true,
  },
  { label: 'Chrome profile', icon: <ChromeIcon badge="clown" />, running: true },
];

const Taskbar: React.FC = () => (
  <footer className="flex h-10 shrink-0 bg-[#202121] text-white">
    {systemButtons.map(b => <IconButton key={b.label} label={b.label} className="w-12">{b.icon}</IconButton>)}
    <div className="flex gap-px ml-[3px]">
      {appButtons.map(b => (
        <button key={b.label} aria-label={b.label} className="w-12 flex flex-col items-center">
          <span className="flex-1 flex items-center">{b.icon}</span>
          {b.running && <span className="w-10 h-[2px] bg-[#84e0ea]" />}
        </button>
      ))}
      <button aria-label="Unity" className="w-12 flex flex-col items-center border-r-4 border-[#5e5e5e] bg-[#4b4c4c]">
        <span className="flex-1 flex items-center"><span className="w-6 h-6 bg-black flex items-center justify-center"><FaUnity size={13} /></span></span>
        <span className="w-full h-[2px] bg-[#84e0ea]" />
      </button>
    </div>
    <div className="ml-auto flex items-center pr-1">
      <IconButton label="Show hidden icons" className="w-6"><svg width="12" height="7" fill="none" stroke="#fff" strokeWidth="1.300"><path d="M.5 6.500L6 1l5.500 5.500" /></svg></IconButton>
      <IconButton label="Signal" className="w-6"><svg width="14" height="15" fill="#5cf000"><path d="M0 10h2v5H0zM3 8h2v7H3zM6 5h2v10H6zM9 3h2v12H9zM12 0h2v15h-2z" /></svg></IconButton>
      <IconButton label="Network" className="w-6"><svg width="13" height="13" fill="none" stroke="#ddd" strokeWidth="1.200"><path d="M1 12Q1 1 12 1M3.500 12Q4 4 12 4M6.500 12.500Q7 7 12 7" /><circle cx="11" cy="11" r="1.500" fill="#fff" stroke="none" /></svg></IconButton>
      <IconButton label="Red app tray" className="w-6"><RedFlower size={16} /></IconButton>
      <time className="w-16 text-center font-['Noto_Sans',sans-serif] text-[12px] leading-[18px]">4:10 PM<br />7/5/2020</time>
      <IconButton label="Notifications" className="w-[40px]"><svg width="17" height="17" fill="none" stroke="#fff" strokeWidth="1.200"><path d="M1 1h15v12h-5l-2.500 2.500L6 13H1z" /></svg></IconButton>
      <span className="ml-[8px] h-full w-px bg-[#777]" />
    </div>
  </footer>
);

const App: React.FC = () => (
  <div className="min-h-screen flex flex-col bg-[#8a8a8a] font-['Inter',sans-serif] text-[12px] leading-4 text-[#0c0c0c] [font-variant-ligatures:none]">
    <TitleBar />
    <MainToolbar />
    <main className="flex flex-1 gap-[2px] min-h-0">
      <div className="flex-1 min-w-0 flex flex-col gap-[2px]">
        <div className="flex gap-[2px] bg-[#8a8a8a] *:bg-[#c2c2c2]">
          <HierarchyPanel />
          <AnimatorPanel />
        </div>
        <div className="flex flex-1 bg-[#c2c2c2]">
          <ConsolePanel />
        </div>
      </div>
      <aside className="w-[325px] shrink-0 flex flex-col bg-[#c2c2c2]">
        <div className={tabBarClass}>
          <Tab icon={<InfoIcon />} label="Inspector" active className="w-[93px]" />
          <Tab icon={<BulbIcon />} label="Lighting" className="border-r-0 px-[10px] gap-[6px]" />
          <TabActions />
        </div>
        <div className="flex flex-1 flex-col basis-0 min-h-0">
          <InspectorPanel />
          <PreviewPanel />
        </div>
      </aside>
    </main>
    <div className="h-[22px] shrink-0 bg-[#8a8a8a]" />
    <Taskbar />
  </div>
);

export default App;
